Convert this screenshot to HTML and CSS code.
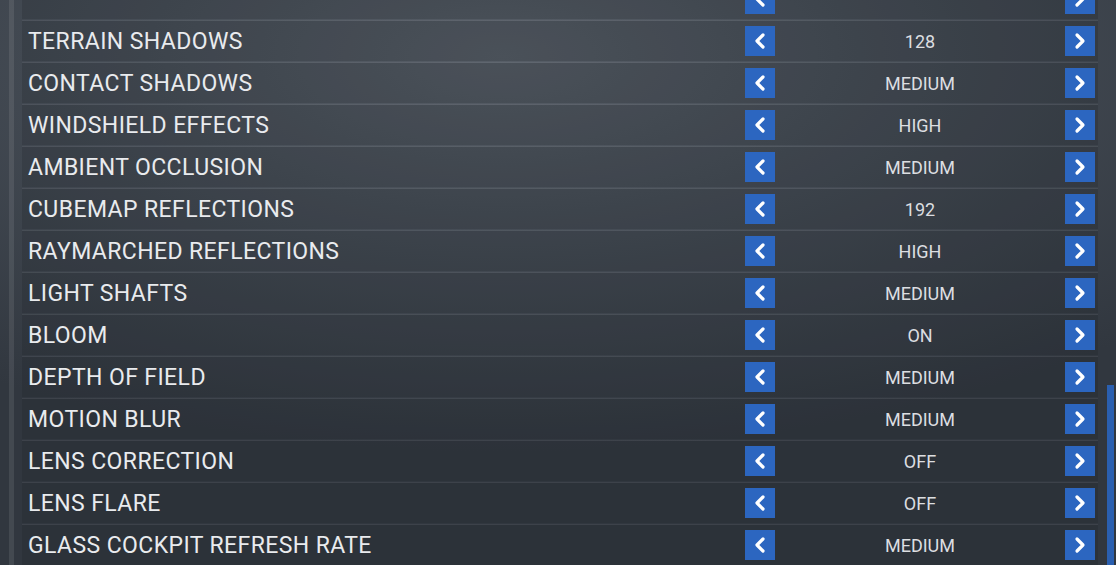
FILE: index.html
```html
<!DOCTYPE html>
<html>
<head>
<meta charset="utf-8">
<link rel="stylesheet" href="styles.css">
</head>
<body>
<div class="page">
  <div class="rail"></div>
  <div class="viewport">
    <div class="list">
      <div class="row"><span class="label"></span><div class="ctrl"><button class="btn"><svg viewBox="0 0 30 30"><path d="M18 9 L12 15 L18 21"/></svg></button><span class="value"></span><button class="btn"><svg viewBox="0 0 30 30"><path d="M12 9 L18 15 L12 21"/></svg></button></div></div>
      <div class="row"><span class="label">TERRAIN SHADOWS</span><div class="ctrl"><button class="btn"><svg viewBox="0 0 30 30"><path d="M18 9 L12 15 L18 21"/></svg></button><span class="value">128</span><button class="btn"><svg viewBox="0 0 30 30"><path d="M12 9 L18 15 L12 21"/></svg></button></div></div>
      <div class="row"><span class="label">CONTACT SHADOWS</span><div class="ctrl"><button class="btn"><svg viewBox="0 0 30 30"><path d="M18 9 L12 15 L18 21"/></svg></button><span class="value">MEDIUM</span><button class="btn"><svg viewBox="0 0 30 30"><path d="M12 9 L18 15 L12 21"/></svg></button></div></div>
      <div class="row"><span class="label">WINDSHIELD EFFECTS</span><div class="ctrl"><button class="btn"><svg viewBox="0 0 30 30"><path d="M18 9 L12 15 L18 21"/></svg></button><span class="value">HIGH</span><button class="btn"><svg viewBox="0 0 30 30"><path d="M12 9 L18 15 L12 21"/></svg></button></div></div>
      <div class="row"><span class="label">AMBIENT OCCLUSION</span><div class="ctrl"><button class="btn"><svg viewBox="0 0 30 30"><path d="M18 9 L12 15 L18 21"/></svg></button><span class="value">MEDIUM</span><button class="btn"><svg viewBox="0 0 30 30"><path d="M12 9 L18 15 L12 21"/></svg></button></div></div>
      <div class="row"><span class="label">CUBEMAP REFLECTIONS</span><div class="ctrl"><button class="btn"><svg viewBox="0 0 30 30"><path d="M18 9 L12 15 L18 21"/></svg></button><span class="value">192</span><button class="btn"><svg viewBox="0 0 30 30"><path d="M12 9 L18 15 L12 21"/></svg></button></div></div>
      <div class="row"><span class="label">RAYMARCHED REFLECTIONS</span><div class="ctrl"><button class="btn"><svg viewBox="0 0 30 30"><path d="M18 9 L12 15 L18 21"/></svg></button><span class="value">HIGH</span><button class="btn"><svg viewBox="0 0 30 30"><path d="M12 9 L18 15 L12 21"/></svg></button></div></div>
      <div class="row"><span class="label">LIGHT SHAFTS</span><div class="ctrl"><button class="btn"><svg viewBox="0 0 30 30"><path d="M18 9 L12 15 L18 21"/></svg></button><span class="value">MEDIUM</span><button class="btn"><svg viewBox="0 0 30 30"><path d="M12 9 L18 15 L12 21"/></svg></button></div></div>
      <div class="row"><span class="label">BLOOM</span><div class="ctrl"><button class="btn"><svg viewBox="0 0 30 30"><path d="M18 9 L12 15 L18 21"/></svg></button><span class="value">ON</span><button class="btn"><svg viewBox="0 0 30 30"><path d="M12 9 L18 15 L12 21"/></svg></button></div></div>
      <div class="row"><span class="label">DEPTH OF FIELD</span><div class="ctrl"><button class="btn"><svg viewBox="0 0 30 30"><path d="M18 9 L12 15 L18 21"/></svg></button><span class="value">MEDIUM</span><button class="btn"><svg viewBox="0 0 30 30"><path d="M12 9 L18 15 L12 21"/></svg></button></div></div>
      <div class="row"><span class="label">MOTION BLUR</span><div class="ctrl"><button class="btn"><svg viewBox="0 0 30 30"><path d="M18 9 L12 15 L18 21"/></svg></button><span class="value">MEDIUM</span><button class="btn"><svg viewBox="0 0 30 30"><path d="M12 9 L18 15 L12 21"/></svg></button></div></div>
      <div class="row"><span class="label">LENS CORRECTION</span><div class="ctrl"><button class="btn"><svg viewBox="0 0 30 30"><path d="M18 9 L12 15 L18 21"/></svg></button><span class="value">OFF</span><button class="btn"><svg viewBox="0 0 30 30"><path d="M12 9 L18 15 L12 21"/></svg></button></div></div>
      <div class="row"><span class="label">LENS FLARE</span><div class="ctrl"><button class="btn"><svg viewBox="0 0 30 30"><path d="M18 9 L12 15 L18 21"/></svg></button><span class="value">OFF</span><button class="btn"><svg viewBox="0 0 30 30"><path d="M12 9 L18 15 L12 21"/></svg></button></div></div>
      <div class="row"><span class="label">GLASS COCKPIT REFRESH RATE</span><div class="ctrl"><button class="btn"><svg viewBox="0 0 30 30"><path d="M18 9 L12 15 L18 21"/></svg></button><span class="value">MEDIUM</span><button class="btn"><svg viewBox="0 0 30 30"><path d="M12 9 L18 15 L12 21"/></svg></button></div></div>
    </div>
  </div>
  <div class="scroll"><div class="thumb"></div></div>
</div>
</body>
</html>
```

FILE: styles.css
```css
html, body {
  margin: 0;
  padding: 0;
  height: 100%;
  overflow: hidden;
}
body {
  background: radial-gradient(ellipse 80% 70% at 45% 10%, #575e67 0%, #454c55 45%, #31373f 100%);
  font-family: Roboto, "Noto Sans", "Liberation Sans", sans-serif;
}
.page {
  display: flex;
  height: 565px;
  padding-left: 9px;
}
.rail {
  width: 5px;
  background: rgba(255, 255, 255, 0.09);
  flex: none;
}
.viewport {
  width: 1076px;
  margin-left: 8px;
  overflow: hidden;
  flex: none;
}
.list {
  display: flex;
  flex-direction: column;
  gap: 2px;
  margin-top: -21px;
}
.row {
  height: 40px;
  display: flex;
  align-items: center;
  padding-left: 6px;
  background: rgba(25, 30, 36, 0.2);
  box-shadow: 0 -1px 0 rgba(255, 255, 255, 0.06);
  flex: none;
}
.label {
  flex: 1;
  color: #e9ebee;
  font-size: 23px;
  letter-spacing: 0.4px;
}
.ctrl {
  display: grid;
  grid-template-columns: 30px 290px 30px;
  align-items: center;
  margin-right: 3px;
}
.btn {
  width: 30px;
  height: 30px;
  padding: 0;
  border: none;
  background: #2c66c0;
  display: block;
}
.btn svg {
  width: 30px;
  height: 30px;
  display: block;
}
.btn path {
  fill: none;
  stroke: #ffffff;
  stroke-width: 3.2;
  stroke-linecap: round;
  stroke-linejoin: round;
}
.value {
  text-align: center;
  color: #dcdee1;
  font-size: 18px;
}
.scroll {
  width: 7px;
  margin-left: 9px;
  flex: none;
}
.thumb {
  margin-top: 385px;
  height: 180px;
  background: #2a5fb0;
}
```
